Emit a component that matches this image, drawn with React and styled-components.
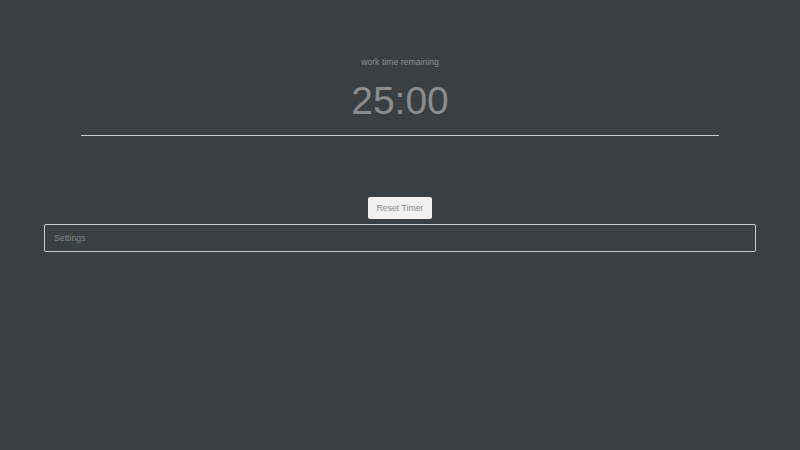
import React from "react";
import styled, { createGlobalStyle } from "styled-components";

const Global = createGlobalStyle`
  html, body { margin: 0; padding: 0; background: #394044; }
  body { font-family: "Liberation Sans", Arial, sans-serif; }
`;

const Page = styled.div`
  width: 800px;
  min-height: 450px;
  background: #394044;
  display: flex;
  flex-direction: column;
  align-items: center;
  padding-top: 56px;
  box-sizing: border-box;
`;

const Label = styled.div`
  font-size: 8.7px;
  line-height: 12px;
  color: #8c8f90;
`;

const Clock = styled.div`
  font-size: 39px;
  line-height: 46px;
  margin-top: 10px;
  color: #8a8d8e;
`;

const Rule = styled.div`
  width: 638px;
  height: 1px;
  background: #c9cbcc;
  margin-top: 11px;
`;

const ResetButton = styled.button`
  margin-top: 61px;
  width: 64px;
  height: 22px;
  border: none;
  border-radius: 2px;
  background: #f1f1f1;
  color: #8c8c8c;
  font-family: "Liberation Sans", Arial, sans-serif;
  font-size: 8.7px;
  padding: 0;
`;

const SettingsBox = styled.div`
  margin-top: 5px;
  width: 712px;
  height: 28px;
  box-sizing: border-box;
  border: 1px solid #c9cbcc;
  border-radius: 2px;
  display: flex;
  align-items: center;
  padding-left: 9px;
  font-size: 8.7px;
  color: #80848a;
`;

export default function App() {
  return (
    <>
      <Global />
      <Page>
        <Label>work time remaining</Label>
        <Clock>25:00</Clock>
        <Rule />
        <ResetButton>Reset Timer</ResetButton>
        <SettingsBox>Settings</SettingsBox>
      </Page>
    </>
  );
}
